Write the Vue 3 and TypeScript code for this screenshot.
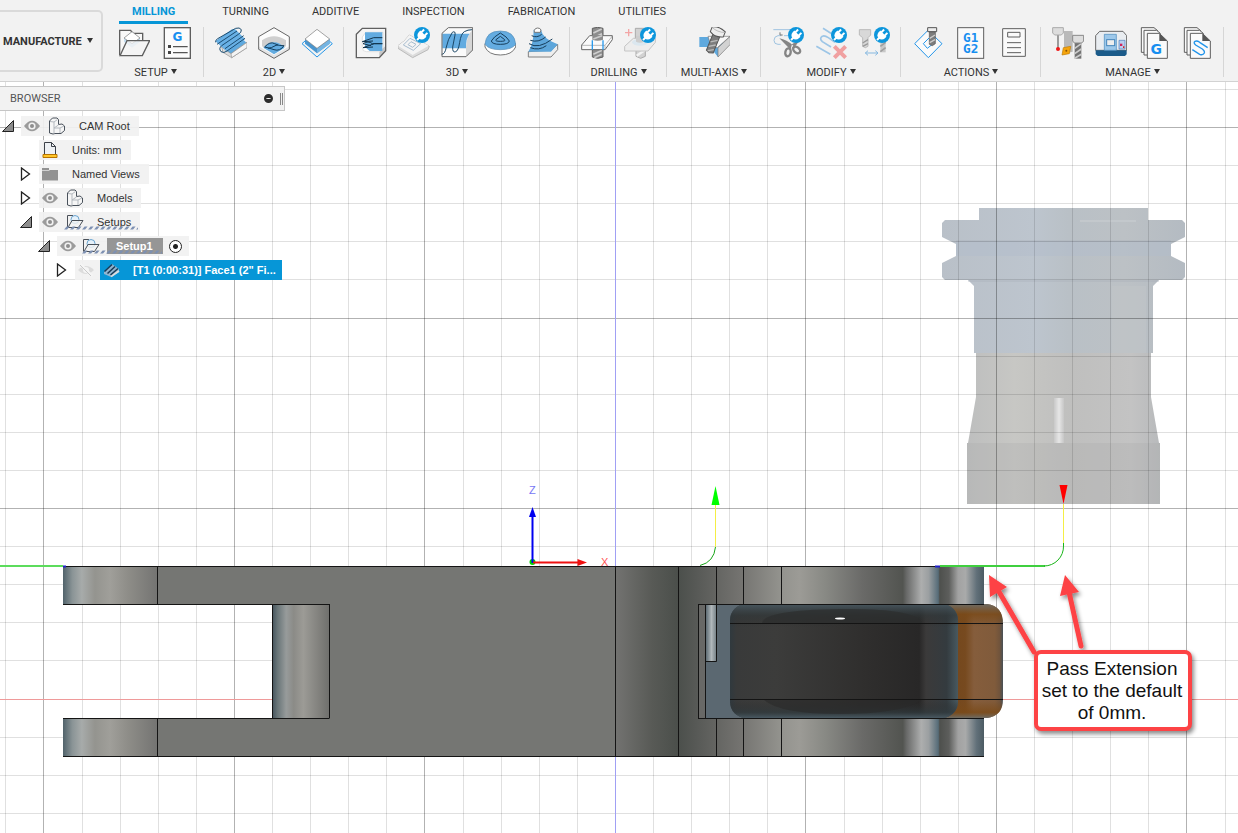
<script setup lang="ts">
interface ToolGroup {
  label: string
  icons: { id: string; name: string }[]
}

interface TreeRow {
  label: string
  level: number
  toggle: 'open' | 'closed' | 'none'
  eye: 'on' | 'off' | 'none'
  icon: string
  kind?: 'dashed' | 'active' | 'selected'
}

interface GridLine {
  pos: number
  major: boolean
}

const tabs: string[] = ['MILLING', 'TURNING', 'ADDITIVE', 'INSPECTION', 'FABRICATION', 'UTILITIES']

const groups: ToolGroup[] = [
  { label: 'SETUP', icons: [{ id: 'new-setup', name: 'New Setup' }, { id: 'nc-program', name: 'NC Program' }] },
  { label: '2D', icons: [{ id: 'face', name: 'Face' }, { id: 'pocket2d', name: '2D Pocket' }, { id: 'contour2d', name: '2D Contour' }] },
  {
    label: '3D',
    icons: [
      { id: 'adaptive', name: 'Adaptive Clearing' },
      { id: 'steep', name: 'Steep and Shallow' },
      { id: 'parallel', name: 'Parallel' },
      { id: 'scallop', name: 'Scallop' },
      { id: 'ramp', name: 'Ramp' },
    ],
  },
  { label: 'DRILLING', icons: [{ id: 'drill', name: 'Drill' }, { id: 'hole', name: 'Hole Recognition' }] },
  { label: 'MULTI-AXIS', icons: [{ id: 'swarf', name: 'Swarf' }] },
  { label: 'MODIFY', icons: [{ id: 'trim', name: 'Trim' }, { id: 'delete-pass', name: 'Delete Passes' }, { id: 'replace-tool', name: 'Replace Tool' }] },
  { label: 'ACTIONS', icons: [{ id: 'simulate', name: 'Simulate' }, { id: 'post', name: 'Post Process' }, { id: 'sheet', name: 'Setup Sheet' }] },
  {
    label: 'MANAGE',
    icons: [
      { id: 'tool-lib', name: 'Tool Library' },
      { id: 'machine-lib', name: 'Machine Library' },
      { id: 'post-lib', name: 'Post Library' },
      { id: 'template-lib', name: 'Template Library' },
    ],
  },
]

const rows: TreeRow[] = [
  { label: 'CAM Root', level: 0, toggle: 'open', eye: 'on', icon: 'body' },
  { label: 'Units: mm', level: 1, toggle: 'none', eye: 'none', icon: 'units' },
  { label: 'Named Views', level: 1, toggle: 'closed', eye: 'none', icon: 'folder' },
  { label: 'Models', level: 1, toggle: 'closed', eye: 'on', icon: 'body' },
  { label: 'Setups', level: 1, toggle: 'open', eye: 'on', icon: 'setup', kind: 'dashed' },
  { label: 'Setup1', level: 2, toggle: 'open', eye: 'on', icon: 'setup', kind: 'active' },
  { label: '[T1 (0:00:31)] Face1 (2" Fi...', level: 3, toggle: 'closed', eye: 'off', icon: 'op', kind: 'selected' },
]

const STEP = 38.1

function gridLines(origin: number, from: number, to: number): GridLine[] {
  const lines: GridLine[] = []
  for (let i = from; i <= to; i++) {
    if (i !== 0) lines.push({ pos: Math.floor(origin + i * STEP) + 0.5, major: i % 5 === 0 })
  }
  return lines
}

const columns = gridLines(615.4, -16, 60)
const lines = gridLines(699, -16, 40)
</script>

<template>
  <div class="app">
    <svg class="defs" aria-hidden="true">
      <defs>
        <symbol id="plug" viewBox="-24 -24 48 48">
          <circle r="24" fill="#0d96dc" />
          <g transform="rotate(45)" fill="#fff">
            <path d="M-13-6H13V1A13 13 0 0 1-13 1Z" />
            <rect x="-10" y="-16" width="6" height="12" /><rect x="4" y="-16" width="6" height="12" />
            <rect x="-3" y="10" width="6" height="11" />
          </g>
        </symbol>

        <symbol id="i-new-setup" viewBox="0 0 96 96">
          <path d="M5 84V10H38L44 19H74V41" fill="#f8f8f8" stroke="#5e5e5e" stroke-width="4" />
          <path d="M42 14 66 34V44L42 62 18 44V34Z" fill="#c5dff2" /><path d="M42 14 66 33 42 50 18 33Z" fill="#fff" stroke="#777" stroke-width="2" />
          <path d="M6 86 27 41H95L73 86Z" fill="#f4f4f4" fill-opacity=".75" stroke="#5e5e5e" stroke-width="4" />
        </symbol>
        <symbol id="i-nc-program" viewBox="0 0 96 96">
          <rect x="10" y="2" width="78" height="92" fill="#fbfbfb" stroke="#5e5e5e" stroke-width="4" />
          <text x="49" y="41" text-anchor="middle" font-family="DejaVu Sans" font-weight="700" font-size="36" fill="#188ff0">G</text>
          <path d="M21 54h9v9H21zM21 72h9v9H21z" fill="#444" /><path d="M36 59H80M36 77H80" stroke="#555" stroke-width="4" />
        </symbol>
        <symbol id="i-face" viewBox="0 0 96 96">
          <path d="M2 42 52 6 95 48 50 80 40 78Z" fill="#5fa9de" />
          <path d="M20 60 48 80 96 46V62L50 92 24 76Z" fill="#dcdcdc" stroke="#909090" stroke-width="2" /><path d="M48 80 96 46V62L50 92Z" fill="#f4f4f4" stroke="#909090" stroke-width="2" />
          <path d="M4 44 60 6 90 36 36 74Z" fill="#68b0e5" />
          <g fill="none" stroke="#1b4c70" stroke-width="3">
            <path d="M2 46Q0 40 8 35L62 4Q74 0 79 8Q80 17 70 22L20 56Q10 64 18 74Q26 80 36 72L90 34" />
            <path d="M6 52 66 12M30 65 86 26" />
          </g>
        </symbol>
        <symbol id="i-pocket2d" viewBox="0 0 96 96">
          <path d="M48 2 94 29V67L48 94 2 67V29Z" fill="#fcfcfc" />
          <path d="M12 58V40Q48 16 84 40V58L76 62Q48 34 20 62Z" fill="#cfcfcf" />
          <path d="M16 62Q48 30 80 62L48 82Z" fill="#62abe0" />
          <path d="M20 60Q36 42 50 50T78 56Q66 74 48 68T20 60ZM30 64Q42 62 48 58T60 54" fill="none" stroke="#123e5e" stroke-width="3" />
          <path d="M2 58 48 84 94 58V67L48 94 2 67Z" fill="#e4e4e4" />
          <path d="M48 2 94 29V67L48 94 2 67V29Z" fill="none" stroke="#666" stroke-width="3" />
        </symbol>
        <symbol id="i-contour2d" viewBox="0 0 96 96">
          <path d="M12 42 3 50 48 90 94 50 85 42" fill="none" stroke="#2295e8" stroke-width="3" />
          <path d="M12 36 48 64 86 36V50L48 79 12 50Z" fill="#4a96cf" /><path d="M48 64 86 36V50L48 79Z" fill="#74b4e2" />
          <path d="M48 7 86 36 48 64 12 36Z" fill="#fff" stroke="#777" stroke-width="2" />
        </symbol>
        <symbol id="i-adaptive" viewBox="0 0 96 96">
          <path d="M4 22 22 4H92V71L73 92H4Z" fill="#f5f5f5" /><path d="M73 92V74L92 56V71Z" fill="#c7c7c7" />
          <path d="M22 30 32 16H84V64L72 74H34Q22 74 22 62Z" fill="#fff" stroke="#d2d2d2" stroke-width="2" />
          <path d="M30 16H82V72H44L30 60Z" fill="#62abe0" />
          <path d="M82 32H56L22 44 54 42M82 50H58L24 62 54 60M24 50Q40 40 52 50H82M24 50 48 56" fill="none" stroke="#12344d" stroke-width="3" />
          <path d="M4 22 22 4H92V71L73 92H4Z" fill="none" stroke="#606060" stroke-width="4" />
        </symbol>
        <symbol id="i-steep" viewBox="0 0 96 96">
          <path d="M0 56Q20 44 34 24L94 58 90 68 44 92 0 64Z" fill="#dcdcdc" stroke="#bbb" stroke-width="3" />
          <path d="M0 56Q20 44 34 24L92 56 44 84Z" fill="#f4f4f4" />
          <path d="M16 54 36 34 68 50 46 70ZM30 53 39 44 54 52 44 61Z" fill="none" stroke="#a8bdcf" stroke-width="3" />
          <use href="#plug" x="48" y="0" width="48" height="48" />
        </symbol>
        <symbol id="i-parallel" viewBox="0 0 96 96">
          <path d="M3 19 22 2H95V69L75 89H3Z" fill="#fafafa" />
          <path d="M75 89V62Q76 26 95 8V69Z" fill="#d6d6d6" />
          <path d="M4 64V20H86Q74 34 75 64Z" fill="#62abe0" />
          <path d="M2 82Q12 82 16 60T34 16Q44 10 42 24L35 60Q34 78 44 74Q52 72 56 46T70 14Q80 8 94 8" fill="none" stroke="#1b4766" stroke-width="3" />
          <path d="M3 19 22 2H95V69L75 89H3Z" fill="none" stroke="#666" stroke-width="3" />
        </symbol>
        <symbol id="i-scallop" viewBox="0 0 96 96">
          <path d="M3 50V60Q14 84 49 84T95 60V50Z" fill="#fff" stroke="#777" stroke-width="3" />
          <path d="M3 52Q6 12 49 12T95 52Q84 68 49 68T3 52Z" fill="#64ace1" stroke="#568db5" stroke-width="2" />
          <path d="M49 18Q70 30 76 42Q74 52 49 52T22 42Q28 30 49 18ZM49 28 62 38Q66 43 49 43T36 38Z" fill="none" stroke="#173e5b" stroke-width="3" />
        </symbol>
        <symbol id="i-ramp" viewBox="0 0 96 96">
          <path d="M4 74V90H72L92 68V52L72 70Z" fill="#eee" stroke="#808080" stroke-width="3" />
          <path d="M20 8H42Q46 34 92 52L72 74H4Q20 50 20 8Z" fill="#5da6db" />
          <path d="M22 10Q24 3 32 3T42 9L40 16H22Z" fill="#fff" stroke="#777" stroke-width="3" />
          <path d="M14 26Q30 34 44 22M10 40Q34 48 56 30M6 50Q34 68 76 36M10 62Q36 72 58 56" fill="none" stroke="#173e5b" stroke-width="3" />
        </symbol>
        <symbol id="i-drill" viewBox="0 0 96 96">
          <path d="M34 4Q50-2 66 4V40H34ZM34 60H66V90Q50 98 34 90Z" fill="#8d8d8d" stroke="#606060" stroke-width="3" />
          <path d="M37 18 62 6M37 32 63 20M37 82 63 70M40 92 62 82" stroke="#cfcfcf" stroke-width="5" />
          <path d="M2 54 26 26H94V38L72 68H2Z" fill="#fafafa" stroke="#666" stroke-width="3" />
          <path d="M2 55H72L94 27M72 55V68" fill="none" stroke="#999" stroke-width="2" />
          <path d="M34 24H66V38Q50 44 34 38Z" fill="#8d8d8d" /><path d="M37 36 63 26" stroke="#ccc" stroke-width="5" />
          <path d="M34 40V68M66 40V68" stroke="#2a9aec" stroke-width="4" />
        </symbol>
        <symbol id="i-hole" viewBox="0 0 96 96">
          <path d="M34 4H60V40H34ZM36 64H64V88L50 94 36 88Z" fill="#d2d2d2" stroke="#aaa" stroke-width="3" />
          <path d="M38 86 62 70" stroke="#f3f3f3" stroke-width="7" />
          <path d="M2 58 28 34H94V46L72 72H2Z" fill="#ededed" stroke="#c4c4c4" stroke-width="3" />
          <ellipse cx="48" cy="46" rx="24" ry="10" fill="#dbe7ef" /><path d="M36 26H60V44Q48 50 36 44Z" fill="#cdcdcd" />
          <path d="M14 6V28M3 17H25" stroke="#f3a6a6" stroke-width="4" />
          <use href="#plug" x="48" y="0" width="48" height="48" />
        </symbol>
        <symbol id="i-swarf" viewBox="0 0 96 96">
          <path d="M4 30H58L76 46 60 90 36 60H4Z" fill="#5fa9de" /><path d="M30 28H96L58 62 40 60Z" fill="#f7f7f7" stroke="#777" stroke-width="2" />
          <path d="M60 62 97 28V52L60 90Z" fill="#d2d2d2" stroke="#777" stroke-width="2" />
          <g transform="rotate(22 48 40)"><path d="M38 24V76L48 80 60 76V24Z" fill="#7d7d7d" stroke="#555" stroke-width="3" /><path d="M40 48 58 36M40 63 58 51M42 76 58 66" stroke="#bbb" stroke-width="4" /><path d="M28 4Q48-6 70 4V20Q48 32 28 20Z" fill="#eee" stroke="#555" stroke-width="3" /><path d="M28 6Q48 14 70 6" fill="none" stroke="#aaa" stroke-width="2" /></g>
        </symbol>
        <symbol id="i-trim" viewBox="0 0 96 96">
          <path d="M4 8H56M28 26H18Q6 28 6 40T18 52H26M36 26H50" fill="none" stroke="#9fc3e0" stroke-width="3" /><path d="M24 16V24H32" fill="none" stroke="#777" stroke-width="3" />
          <path d="M22 34Q44 38 64 56L56 68ZM88 34 60 52 56 66 68 60Z" fill="#858585" />
          <ellipse cx="48" cy="76" rx="8" ry="12" fill="none" stroke="#858585" stroke-width="7" transform="rotate(12 48 76)" /><ellipse cx="74" cy="69" rx="8" ry="12" fill="none" stroke="#858585" stroke-width="7" transform="rotate(-50 74 69)" />
          <use href="#plug" x="48" y="0" width="48" height="48" />
        </symbol>
        <symbol id="i-delete-pass" viewBox="0 0 96 96">
          <path d="M4 58 46 82M48 60 22 44Q12 34 22 28Q28 24 40 32L60 46M24 4 50 20" fill="none" stroke="#9cc5e6" stroke-width="5" />
          <path d="M58 58 92 92M92 58 58 92" stroke="#f0a0a0" stroke-width="12" />
          <use href="#plug" x="48" y="0" width="48" height="48" />
        </symbol>
        <symbol id="i-replace-tool" viewBox="0 0 96 96">
          <path d="M4 8H38V24L30 32V58L22 62 14 58V32L4 24Z" fill="#d8d8d8" stroke="#bbb" stroke-width="3" /><path d="M14 48 30 38M14 58 30 50" stroke="#999" stroke-width="4" />
          <path d="M67 40H83V76H67Z" fill="#c8c8c8" /><path d="M67 58 83 46M67 74 83 62" stroke="#a0a0a0" stroke-width="5" />
          <path d="M22 78H60M30 71 22 78 30 85M52 71 60 78 52 85" fill="none" stroke="#85b8e0" stroke-width="3" />
          <use href="#plug" x="48" y="0" width="48" height="48" />
        </symbol>
        <symbol id="i-simulate" viewBox="0 0 96 96">
          <path d="M48 10 90 50 49 92 8 50Z" fill="#fafafa" stroke="#2395ea" stroke-width="3" /><path d="M52 32 34 50 46 64 66 48" fill="none" stroke="#2395ea" stroke-width="3" />
          <path d="M52 14H70V50L61 56 52 52Z" fill="#7d7d7d" stroke="#555" stroke-width="2" /><path d="M53 34 69 24M53 47 69 38" stroke="#ccc" stroke-width="4" /><path d="M47 2H74V14H47Z" fill="#eee" stroke="#555" stroke-width="3" />
        </symbol>
        <symbol id="i-post" viewBox="0 0 96 96">
          <rect x="8" y="2" width="78" height="92" fill="#fafafa" stroke="#5e5e5e" stroke-width="3" />
          <g font-family="DejaVu Sans Mono" font-weight="700" font-size="38" fill="#188ff0" text-anchor="middle"><text x="47" y="45">G1</text><text x="47" y="79">G2</text></g>
        </symbol>
        <symbol id="i-sheet" viewBox="0 0 96 96">
          <path d="M14 5H82V88H14ZM29 16H66V30H29ZM27 47H69M27 62H69M27 77H69" fill="#fafafa" stroke="#5e5e5e" stroke-width="3" />
        </symbol>
        <symbol id="i-tool-lib" viewBox="0 0 96 96">
          <path d="M18 22V64" stroke="#707070" stroke-width="4" /><path d="M2 2H34V18L28 24H8L2 18Z" fill="#ddd" stroke="#aaa" stroke-width="3" /><circle cx="18" cy="66" r="6" fill="#f01818" />
          <path d="M36 12H62V74L36 80Z" fill="#b9b9b9" /><path d="M34 62 56 58 52 80 30 84Z" fill="#f5a40c" stroke="#c07a00" stroke-width="2" /><circle cx="43" cy="71" r="3" fill="#8a5500" />
          <path d="M68 46H88V95H68Z" fill="#727272" /><path d="M68 64 88 50M68 80 88 66M68 94 88 82" stroke="#ccc" stroke-width="5" /><path d="M62 25H95V42L89 48H67L62 42Z" fill="#ddd" stroke="#888" stroke-width="3" />
        </symbol>
        <symbol id="i-machine-lib" viewBox="0 0 96 96">
          <path d="M2 70V26L14 13H84L95 26V70Z" fill="#e9edf1" stroke="#686868" stroke-width="3" />
          <path d="M2 70H95V82L90 87H8L2 82Z" fill="#1b5b8a" /><path d="M28 22H64V70H28Z" fill="#9dc8ea" stroke="#4385bb" stroke-width="2" /><rect x="35" y="38" width="24" height="18" fill="#eee" stroke="#4385bb" stroke-width="3" />
          <path d="M72 40H90V66H72Z" fill="#b9cff0" stroke="#4b7cc0" stroke-width="2" /><path d="M75 50H82V57H75Z" fill="#d0235a" /><path d="M84 58H88V63H84Z" fill="#d22" />
        </symbol>
        <symbol id="i-post-lib" viewBox="0 0 96 96">
          <path d="M18 76H10V2H48L60 12" fill="#fafafa" stroke="#5e5e5e" stroke-width="3" /><path d="M27 84H18V10H56L68 20" fill="#fafafa" stroke="#5e5e5e" stroke-width="3" />
          <path d="M28 19H64L88 42V94H28Z" fill="#fafafa" stroke="#5e5e5e" stroke-width="3" /><path d="M64 19 88 42H64Z" fill="#555" />
          <text x="55" y="82" text-anchor="middle" font-family="DejaVu Sans" font-weight="700" font-size="42" fill="#188ff0">G</text>
        </symbol>
        <symbol id="i-template-lib" viewBox="0 0 96 96">
          <path d="M18 76H10V2H48L60 12" fill="#fafafa" stroke="#5e5e5e" stroke-width="3" /><path d="M27 84H18V10H56L68 20" fill="#fafafa" stroke="#5e5e5e" stroke-width="3" />
          <path d="M28 19H64L88 42V94H28Z" fill="#fafafa" stroke="#5e5e5e" stroke-width="3" /><path d="M64 19 88 42H64Z" fill="#555" />
          <path d="M34 68 56 82Q66 86 70 78Q72 72 64 66L44 54Q36 47 42 43Q48 40 56 46L80 62" fill="none" stroke="#2395ea" stroke-width="4" />
        </symbol>

        <symbol id="t-body" viewBox="0 0 18 20">
          <path d="M1.500 5 4.500 2H9L10.500 3.500V8.500L14 8 16.500 10V14.500L13 17.500H7L5 18 1.500 17Z" fill="#f6f6f6" stroke="#4a525c" stroke-width="1" stroke-linejoin="round" />
          <path d="M2 5.500 6 6V17.500M6 6 9.500 3.500M6 12 10.500 9M6 12H12L16 10M12 12V17" fill="none" stroke="#b4b9bf" />
        </symbol>
        <symbol id="t-units" viewBox="0 0 18 20">
          <path d="M2.500 14V2.500H9.500L13.500 6.500V14" fill="#eef1f4" stroke="#3c4148" /><path d="M9.500 2.500V6.500H13.500" fill="none" stroke="#3c4148" />
          <path d="M1 14.500H15V17.500H1Z" fill="#ffc629" stroke="#b87400" />
        </symbol>
        <symbol id="t-folder" viewBox="0 0 18 20"><path d="M0 4H7V6H16V16.500H0Z" fill="#929292" /><path d="M0 6.500H7.500" stroke="#d0d0d0" /></symbol>
        <symbol id="t-setup" viewBox="0 0 18 20">
          <path d="M1.500 15.500V3.500H7M12 8V5" fill="none" stroke="#4a5058" /><circle cx="9" cy="7.500" r="4" fill="#e6f1fa" stroke="#6ba5d0" />
          <path d="M2 15.500 6 8.500H17L12.500 15.500Z" fill="#f2f2f2" fill-opacity=".8" stroke="#4a5058" />
        </symbol>
        <symbol id="t-op" viewBox="0 0 18 20">
          <path d="M1 12 9 4 16 9V12L8 17 1 14Z" fill="#8fb4cf" /><path d="M8 16.500 16 11" stroke="#d8dde1" stroke-width="2" /><path d="M1.500 11.500 9 4.500M4.500 13.500 12 6.500M7.500 15 15 8.500" stroke="#173b57" stroke-width="1.500" />
        </symbol>
        <symbol id="t-eye" viewBox="0 0 16 16">
          <path d="M0 8Q8-2.500 16 8Q8 18.500 0 8Z" fill="#9b9b9b" /><circle cx="8" cy="8" r="3.600" fill="#f2f2f2" /><circle cx="8" cy="8" r="2" fill="#8e8e8e" />
        </symbol>
        <symbol id="t-eye-off" viewBox="0 0 16 16">
          <path d="M0 8Q8 0 16 8Q8 16 0 8Z" fill="#dcdcdc" /><circle cx="8" cy="8" r="3" fill="#f5f5f5" /><path d="M2 2 14 14" stroke="#f5f5f5" stroke-width="3" /><path d="M2 3 13 14" stroke="#c9c9c9" />
        </symbol>
      </defs>
    </svg>

    <header class="ribbon">
      <button class="workspace" type="button">MANUFACTURE<span class="caret"></span></button>
      <div class="ribbon-main">
        <nav class="tabs">
          <button v-for="(tab, i) in tabs" :key="tab" type="button" class="tab" :class="{ current: i === 0 }">{{ tab }}</button>
        </nav>
        <div class="groups">
          <section v-for="group in groups" :key="group.label" class="group">
            <div class="icons">
              <button v-for="icon in group.icons" :key="icon.id" type="button" class="tool" :aria-label="icon.name">
                <svg width="32" height="32"><use :href="'#i-' + icon.id" /></svg>
              </button>
            </div>
            <button type="button" class="group-label">{{ group.label }}<span class="caret"></span></button>
          </section>
        </div>
      </div>
    </header>

    <main class="viewport">
      <svg class="scene" aria-hidden="true">
        <defs>
          <linearGradient id="holder" x1="942" x2="1185" gradientUnits="userSpaceOnUse"><stop offset="0" stop-color="#b9c0c8" /><stop offset=".38" stop-color="#bdc5ce" /><stop offset=".52" stop-color="#b9c0c6" /><stop offset=".75" stop-color="#bcc1c5" /><stop offset="1" stop-color="#b4bbc2" /></linearGradient>
          <linearGradient id="cutter" x1="966" x2="1160" gradientUnits="userSpaceOnUse"><stop offset="0" stop-color="#bdbebe" /><stop offset=".25" stop-color="#c7c7c4" /><stop offset=".55" stop-color="#bfbfbe" /><stop offset=".85" stop-color="#c3c3c3" /><stop offset="1" stop-color="#b8babc" /></linearGradient>
          <linearGradient id="shine"><stop offset="0" stop-color="#c8c8c8" /><stop offset=".5" stop-color="#e6e6e6" /><stop offset="1" stop-color="#c6c6c6" /></linearGradient>
          <linearGradient id="lug"><stop offset="0" stop-color="#51636b" /><stop offset=".1" stop-color="#8a9496" /><stop offset=".2" stop-color="#a7abaa" /><stop offset=".34" stop-color="#94948f" /><stop offset=".5" stop-color="#a09f9a" /><stop offset=".68" stop-color="#8f8e89" /><stop offset="1" stop-color="#747472" /></linearGradient>
          <linearGradient id="pin"><stop offset="0" stop-color="#43525b" /><stop offset=".1" stop-color="#6a7679" /><stop offset=".25" stop-color="#979b9b" /><stop offset=".38" stop-color="#8b8b87" /><stop offset=".55" stop-color="#9c9b96" /><stop offset="1" stop-color="#70706d" /></linearGradient>
          <linearGradient id="right" x1="615" x2="984" gradientUnits="userSpaceOnUse">
            <stop offset="0" stop-color="#737371" /><stop offset=".1" stop-color="#585a56" /><stop offset=".17" stop-color="#4b4f4b" /><stop offset=".22" stop-color="#575956" /><stop offset=".34" stop-color="#747370" /><stop offset=".45" stop-color="#93938e" />
            <stop offset=".5" stop-color="#9c9b96" /><stop offset=".57" stop-color="#888984" /><stop offset=".67" stop-color="#6a6a68" /><stop offset=".78" stop-color="#525450" /><stop offset=".79" stop-color="#686968" /><stop offset=".83" stop-color="#adaeae" /><stop offset=".85" stop-color="#9b9fa1" />
            <stop offset=".876" stop-color="#566c78" /><stop offset=".88" stop-color="#4e504d" /><stop offset=".905" stop-color="#5d5e5c" /><stop offset=".93" stop-color="#a2a2a2" /><stop offset=".95" stop-color="#a9aaaa" /><stop offset=".98" stop-color="#617079" /><stop offset="1" stop-color="#4c5b63" />
          </linearGradient>
          <linearGradient id="roller"><stop offset="0" stop-color="#30393e" /><stop offset=".03" stop-color="#393a3a" /><stop offset=".2" stop-color="#3c3c3b" /><stop offset=".6" stop-color="#2f2e2d" /><stop offset=".83" stop-color="#282727" /><stop offset=".86" stop-color="#3b3a3a" /><stop offset=".95" stop-color="#343b3f" /><stop offset="1" stop-color="#485960" /></linearGradient>
          <linearGradient id="rollerEdge" x2="0" y2="1"><stop offset="0" stop-color="#4a5a63" stop-opacity=".9" /><stop offset=".1" stop-color="#303739" stop-opacity=".6" /><stop offset=".2" stop-color="#2a2a2a" stop-opacity="0" /><stop offset=".85" stop-color="#2a2a2a" stop-opacity="0" /><stop offset=".95" stop-color="#303a3e" stop-opacity=".7" /><stop offset="1" stop-color="#4a5a63" /></linearGradient>
          <linearGradient id="brown" x1="945" x2="1003" gradientUnits="userSpaceOnUse"><stop offset="0" stop-color="#70451c" /><stop offset=".35" stop-color="#774a1f" /><stop offset=".5" stop-color="#855d3c" /><stop offset=".86" stop-color="#805b3b" /><stop offset=".94" stop-color="#71543c" /><stop offset="1" stop-color="#485158" /></linearGradient>
          <linearGradient id="brownEdge" x2="0" y2="1"><stop offset="0" stop-color="#6d6b64" /><stop offset=".09" stop-color="#7a4a18" stop-opacity=".8" /><stop offset=".2" stop-color="#7a4a18" stop-opacity="0" /><stop offset=".85" stop-color="#7a4a18" stop-opacity="0" /><stop offset=".95" stop-color="#7a4a18" stop-opacity=".8" /><stop offset="1" stop-color="#6d6b64" /></linearGradient>
          <linearGradient id="slit"><stop offset="0" stop-color="#5d6b73" /><stop offset=".5" stop-color="#b1b8bb" /><stop offset="1" stop-color="#6b777d" /></linearGradient>
          <filter id="drop" x="-30%" y="-30%" width="170%" height="170%"><feDropShadow dx="2" dy="3" stdDeviation="2" flood-color="#000" flood-opacity=".45" /></filter>
        </defs>

        <!-- scene coordinates start at the lower edge of the ribbon -->
        <g transform="translate(0 -82)">
          <g class="holder">
            <path d="M979 208H1148V220H1182L1185 223V237L1171 244V256L1185 263V277L1182 280H1159L1153 286V353H974V286L968 280H945L942 277V263L956 256V244L942 237V223L945 220H979Z" fill="url(#holder)" />
            <path d="M956 241H1171V256H956Z" fill="#b2bccb" fill-opacity=".45" /><path d="M956 241H1171M968 281H1159" stroke="#a7afb7" stroke-opacity=".6" />
            <path d="M1080 221H1136" stroke="#c3c8cc" stroke-width="2" /><path d="M1112 286H1146V353H1112Z" fill="#c1c5c8" fill-opacity=".5" />
            <path d="M976 353H1151V397L1159 443H1160V504H967V443H968L976 397Z" fill="url(#cutter)" />
            <path d="M967 443H1160V504H967Z" fill="#a6a6a6" fill-opacity=".22" />
            <rect x="1054" y="398" width="10" height="45" fill="url(#shine)" />
          </g>

          <g class="grid">
            <line v-for="c in columns" :key="'c' + c.pos" :x1="c.pos" :x2="c.pos" y1="82" y2="2400" :class="{ major: c.major }" />
            <line v-for="l in lines" :key="'l' + l.pos" x1="0" x2="3000" :y1="l.pos" :y2="l.pos" :class="{ major: l.major }" />
          </g>
          <path d="M615.500 82V2400" stroke="#a0a0f4" /><path d="M0 699.500H3000" stroke="#ef9a9a" />

          <path d="M0 566H63" stroke="#5cdc5c" stroke-width="2" />

          <path d="M157 566H615V757H157V718H329V604H157Z" fill="#757673" />
          <rect x="63" y="566" width="94" height="38" fill="url(#lug)" /><rect x="63" y="718" width="94" height="39" fill="url(#lug)" />
          <rect x="272" y="604" width="57" height="114" fill="url(#pin)" />
          <rect x="615" y="566" width="369" height="191" fill="url(#right)" />
          <rect x="698" y="604" width="286" height="114" fill="#5b6871" /><rect x="698" y="604" width="7" height="114" fill="#686866" />
          <rect x="706" y="604" width="11" height="57" fill="url(#slit)" />
          <path d="M940 604H987Q1003 606 1003 624V699Q1003 716 987 718H940Z" fill="url(#brown)" /><path d="M940 604H987Q1003 606 1003 624V699Q1003 716 987 718H940Z" fill="url(#brownEdge)" />
          <rect x="730" y="604" width="228" height="114" rx="16" fill="url(#roller)" /><rect x="730" y="604" width="228" height="114" rx="16" fill="url(#rollerEdge)" />
          <path d="M762 623Q764 610 840 609T922 623Z" fill="#2c2d2d" fill-opacity=".7" /><path d="M764 700Q780 714 840 714T922 700Z" fill="#2a2a2a" fill-opacity=".6" />
          <ellipse cx="840" cy="618.500" rx="5" ry="1" fill="#fff" />

          <g class="edges">
            <path d="M63 566.500H984M63 604.500H329.500M63 718.500H329.500M63 756.500H984M157.500 566V604M157.500 718V757M329.500 604V718M272.500 604V718M615.500 566V757M678.500 566V757" />
            <path d="M716.500 566V661.500H706M743.500 566V604M781.500 566V604M716.500 718V757M743.500 718V757M781.500 718V757M698.500 604.500V718.500M705.500 604V718M698 604.500H984M698 718.500H984M730 623.500H1003M730 699.500H1003" />
          </g>

          <path d="M940 566H1045" stroke="#3fcf3f" stroke-width="2" />
          <path d="M1044 566A19.500 19.500 0 0 0 1063.500 546V543" fill="none" stroke="#19b519" />
          <path d="M935 566.500H940M63 566.500H66" stroke="#2020c8" stroke-width="2" />
          <path d="M1063.500 504V543M715.500 505V547" stroke="#f4ee45" />
          <path d="M700 565.500Q714 562 715.500 547" fill="none" stroke="#19a519" />
          <path d="M715.500 486 719.500 505H711.500Z" fill="#0f0" /><path d="M1059.500 485H1067.500L1063.500 504Z" fill="#f00" />

          <circle cx="532.500" cy="562" r="3" fill="#00d800" />
          <path d="M532.500 563V515" stroke="#0000f0" stroke-width="2" /><path d="M532.500 507 536 517H529Z" fill="#0000f0" />
          <path d="M533 562.500H580" stroke="#ee1010" stroke-width="2" /><path d="M587 562.500 577.500 559V566Z" fill="#ee1010" />
          <text x="529" y="494" class="axis z">Z</text><text x="601" y="566" class="axis x">X</text>

          <g filter="url(#drop)">
            <path d="M998 590 1034 652M1069 592 1081 646" stroke="#fd4345" stroke-width="5" stroke-linecap="round" />
            <path d="M989 575 1007 587 990 597ZM1065 575 1079 592 1060 596Z" fill="#fd4345" />
          </g>
        </g>
      </svg>

      <aside class="browser">
        <div class="browser-bar">
          <span>BROWSER</span>
          <button type="button" class="collapse" aria-label="Collapse"></button>
          <span class="grip"></span>
        </div>
        <ul class="tree">
          <li v-for="row in rows" :key="row.label" class="row" :class="['level-' + row.level, row.kind]">
            <button v-if="row.toggle !== 'none'" type="button" class="toggle" :aria-label="'Toggle ' + row.label">
              <svg v-if="row.toggle === 'open'" width="14" height="14"><path d="M1.500 12.500 12.500 1.500V12.500Z" fill="#8d8d8d" stroke="#222" /></svg>
              <svg v-else width="14" height="14"><path d="M2.500 1V13L10.500 7Z" fill="#fff" stroke="#222" stroke-width="1.300" /></svg>
            </button>
            <span v-else class="toggle"></span>
            <div class="node">
              <button v-if="row.eye !== 'none'" type="button" class="eye" :aria-label="'Visibility of ' + row.label">
                <svg width="16" height="16"><use :href="row.eye === 'on' ? '#t-eye' : '#t-eye-off'" /></svg>
              </button>
              <div class="entry">
                <svg class="entry-icon" width="18" height="20"><use :href="'#t-' + row.icon" /></svg>
                <span class="entry-label">{{ row.label }}</span>
              </div>
              <input v-if="row.kind === 'active'" type="radio" name="active-setup" class="radio" checked :aria-label="'Activate ' + row.label" />
              <svg v-if="row.kind === 'dashed' || row.kind === 'active'" class="hatch" height="4" width="100%"><path d="M3 2H300" stroke="#7d90b2" stroke-width="3" stroke-dasharray="3 3" transform="skewX(-40)" /></svg>
            </div>
          </li>
        </ul>
      </aside>

      <p class="callout">Pass Extension set to the default of 0mm.</p>
    </main>
  </div>
</template>

<style>
html,
body {
  margin: 0;
  background: #fff;
}
</style>

<style scoped>
.app {
  display: flex;
  flex-direction: column;
  min-height: 100vh;
  font-family: Roboto, 'Liberation Sans', sans-serif;
  font-size: 11px;
  color: #333;
  overflow: hidden;
}
.defs {
  position: absolute;
  width: 0;
  height: 0;
}
button {
  margin: 0;
  padding: 0;
  border: 0;
  background: none;
  font: inherit;
  color: inherit;
}
svg {
  display: block;
}
.ribbon {
  display: flex;
  flex: none;
  box-sizing: border-box;
  height: 82px;
  background: #f2f2f2;
  border-bottom: 1px solid #d2d2d2;
  overflow: hidden;
}
.workspace {
  flex: none;
  box-sizing: border-box;
  width: 103px;
  height: 62px;
  margin-top: 10px;
  padding-left: 3px;
  border: 2px solid #dadada;
  border-left: 0;
  border-radius: 0 5px 5px 0;
  font-weight: 700;
  text-align: left;
  white-space: nowrap;
}
.caret {
  display: inline-block;
  margin-left: 5px;
  vertical-align: 2px;
  border: 3px solid transparent;
  border-top: 5px solid #333;
  border-bottom: 0;
}
.ribbon-main {
  flex: 1;
  min-width: 0;
}
.tabs {
  display: flex;
  gap: 17px;
  padding-left: 16px;
}
.tab {
  height: 24px;
  padding: 2px 13px 0;
  border-bottom: 3px solid transparent;
  line-height: 19px;
}
.tab.current {
  margin-right: 4px;
  color: #0696d7;
  border-color: #0696d7;
  font-weight: 700;
}
.groups {
  display: flex;
  margin-left: 4px;
}
.group {
  flex: none;
  position: relative;
  display: flex;
  flex-direction: column;
  align-items: center;
  box-sizing: border-box;
  min-width: 94px;
  height: 50px;
  margin-top: 3px;
  padding: 0 10px 0 11px;
  border-right: 1px solid #d6d6d6;
}
.icons {
  display: flex;
  gap: 11px;
}
.tool {
  width: 32px;
  height: 32px;
}
.group-label {
  margin-top: 7px;
  line-height: 14px;
  white-space: nowrap;
}
.group-label .caret {
  margin-left: 3px;
}
.viewport {
  position: relative;
  flex: 1;
  min-height: 700px;
  background: #fff;
  overflow: hidden;
}
.scene {
  position: absolute;
  inset: 0;
  width: 100%;
  height: 100%;
}
.grid line {
  stroke: #000;
  stroke-opacity: 0.12;
}
.grid line.major {
  stroke-opacity: 0.3;
}
.edges path {
  fill: none;
  stroke: #141414;
}
.axis {
  font: 11px 'Liberation Sans', sans-serif;
}
.axis.z {
  fill: #7777f5;
}
.axis.x {
  fill: #f55;
}
.browser {
  position: relative;
  width: 285px;
  padding-top: 4px;
}
.browser-bar {
  display: flex;
  align-items: center;
  box-sizing: border-box;
  height: 25px;
  padding: 0 1px 0 10px;
  border: 1px solid #c6c6c6;
  border-left: 0;
  background: #f2f2f2;
  color: #555;
}
.collapse {
  width: 9px;
  height: 9px;
  margin-left: auto;
  border: solid #2c2c2c;
  border-width: 4px 2px;
  border-radius: 50%;
  background: #fff;
}
.grip {
  width: 1px;
  height: 12px;
  margin-left: 7px;
  border: solid #888;
  border-width: 0 1px;
}
.tree {
  margin: 0;
  padding: 3px 0 0;
  list-style: none;
  font-family: 'Liberation Sans', sans-serif;
}
.row {
  display: flex;
  align-items: center;
  height: 24px;
}
.level-1 {
  padding-left: 18px;
}
.level-2 {
  padding-left: 36px;
}
.level-3 {
  padding-left: 54px;
}
.toggle {
  box-sizing: border-box;
  width: 21px;
  height: 14px;
  padding-left: 1px;
}
.node {
  position: relative;
  display: flex;
  align-items: center;
  gap: 8px;
  height: 20px;
  padding: 0 9px 0 3px;
  background: rgba(241, 241, 241, 0.92);
}
.entry {
  display: flex;
  align-items: center;
  gap: 12px;
  height: 20px;
}
.eye + .entry {
  gap: 13px;
}
.entry-label {
  line-height: 20px;
  white-space: nowrap;
}
.active .eye + .entry {
  gap: 7px;
}
.active .entry-label {
  height: 16px;
  padding: 0 10px 0 9px;
  background: #969696;
  color: #fff;
  font-weight: 700;
  line-height: 16px;
}
.active .node {
  padding-right: 7px;
  gap: 6px;
}
.radio {
  appearance: none;
  width: 13px;
  height: 13px;
  margin: 0;
  border: 1px solid #222;
  border-radius: 50%;
  background: radial-gradient(circle, #222 0 2px, #fff 3px);
}
.hatch {
  position: absolute;
  left: 25px;
  bottom: 2px;
  width: calc(100% - 27px);
}
.active .hatch {
  width: calc(100% - 52px);
}
.selected .node {
  padding-right: 0;
}
.selected .eye + .entry {
  gap: 12px;
  width: 182px;
  margin-left: -2px;
  background: #0696d7;
  color: #fff;
  font-weight: 700;
}
.selected .entry-icon {
  margin-left: 3px;
}
.callout {
  position: absolute;
  left: 1034px;
  top: 568px;
  box-sizing: border-box;
  width: 158px;
  margin: 0;
  padding: 4px 2px 3px 0;
  border: 4px solid #fd4345;
  border-radius: 7px;
  background: #fff;
  box-shadow: 2px 3px 4px rgba(0, 0, 0, 0.45);
  color: #111;
  font: 19px/22px 'Liberation Sans', sans-serif;
  text-align: center;
}
</style>
